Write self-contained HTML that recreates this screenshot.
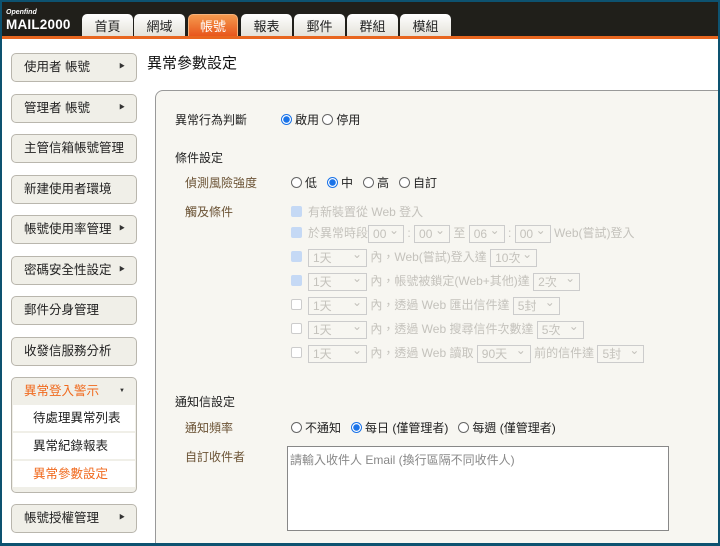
<!DOCTYPE html>
<html><head><meta charset="utf-8"><style>
*{box-sizing:border-box;margin:0;padding:0}
body{width:720px;height:546px;overflow:hidden;font-family:"Liberation Sans","Noto Sans CJK TC",sans-serif;font-size:12px;color:#222;background:#0d5270;position:relative}
#f{position:absolute;left:2px;top:2px;width:716px;height:541px;background:#fff;overflow:hidden}
.hd{position:absolute;left:0;top:0;width:716px;height:34px;background:#201f1a}
.ol{position:absolute;left:0;top:34px;width:716px;height:3px;background:#e8661f}
.logo{position:absolute;left:4px;top:7px;color:#fff}
.logo .a{font-size:7px;font-style:italic;font-weight:bold;line-height:8px}
.logo .b{font-size:13.5px;font-weight:bold;line-height:15px;letter-spacing:.2px}
.tab{position:absolute;top:12px;height:22px;width:51px;background:linear-gradient(#fff,#e4e2d9);border-radius:5px 5px 0 0;text-align:center;line-height:26px;font-size:13px;color:#222}
.tab.on{background:linear-gradient(#f59a4e,#e8561c);color:#fff;border:1px solid #f7b27a;border-bottom:none;line-height:24px}
.btn{position:absolute;left:9px;width:126px;height:29px;border:1px solid #b9b6ad;border-radius:5px;background:#f0efe8;padding-left:12px;line-height:27px;font-size:12.5px}
.btn .ar{position:absolute;right:11px;top:0;font-size:6px;color:#333}
.grp{position:absolute;left:9px;top:375px;width:126px;height:116px;border:1px solid #b9b6ad;border-radius:5px;background:#f0efe8;overflow:hidden}
.grp .h{height:27px;line-height:27px;padding-left:12px;color:#f06a1e;font-size:12.5px;position:relative}
.grp .i{background:#fff;height:26px;margin:0 1px 2px;line-height:26px;padding-left:20px;font-size:12.5px}
.title{position:absolute;left:145px;top:50px;font-size:15px;color:#111}
.pn{position:absolute;left:153px;top:88px;width:600px;height:480px;background:#f7f6f1;border:1px solid #999;border-radius:8px 0 0 0}
.t{position:absolute;white-space:nowrap}
.lb{color:#6b5335}
.dis{color:#c4c2bc}
.rd{display:inline-block;width:11px;height:11px;border:1px solid #666;border-radius:50%;vertical-align:-1px;margin-right:3px;background:#fff}
.rd.on{border:1px solid #1a73e8;background:radial-gradient(#1a73e8 0 3px,#fff 3.5px)}
.cb{display:inline-block;width:11px;height:11px;border:1px solid #ccc;border-radius:2px;vertical-align:-1px;margin-right:6px;background:#fff}
.cb.on{background:#c5d9f5;border-color:#c5d9f5}
.sel{display:inline-block;height:18px;border:1px solid #ccc;background:#f7f6f1;vertical-align:middle;padding-left:4px;line-height:16px;position:relative;color:#c4c2bc}
.sel:after{content:"⌄";position:absolute;right:4px;top:-4px;font-size:12px}
.ta{position:absolute;left:285px;top:444px;width:382px;height:85px;border:1px solid #888;background:#fff;color:#888;padding:4px 2px;font-size:12px}
</style></head><body><div id="f">
<div class="hd"></div><div class="ol"></div>
<div class="logo"><div class="a">Openfind</div><div class="b">MAIL2000</div></div>
<div class="tab" style="left:80px">首頁</div>
<div class="tab" style="left:132px">網域</div>
<div class="tab on" style="left:186px;width:50px">帳號</div>
<div class="tab" style="left:239px">報表</div>
<div class="tab" style="left:292px">郵件</div>
<div class="tab" style="left:345px">群組</div>
<div class="tab" style="left:398px">模組</div>
<div class="btn" style="top:51px">使用者 帳號<span class="ar">▶</span></div>
<div class="btn" style="top:92px">管理者 帳號<span class="ar">▶</span></div>
<div class="btn" style="top:132px">主管信箱帳號管理</div>
<div class="btn" style="top:173px">新建使用者環境</div>
<div class="btn" style="top:213px">帳號使用率管理<span class="ar">▶</span></div>
<div class="btn" style="top:254px">密碼安全性設定<span class="ar">▶</span></div>
<div class="btn" style="top:294px">郵件分身管理</div>
<div class="btn" style="top:335px">收發信服務分析</div>
<div class="grp"><div class="h">異常登入警示<span style="position:absolute;right:11px;font-size:6px;color:#333">▼</span></div>
<div class="i">待處理異常列表</div><div class="i">異常紀錄報表</div><div class="i" style="color:#f06a1e">異常參數設定</div></div>
<div class="btn" style="top:502px">帳號授權管理<span class="ar">▶</span></div>
<div class="title">異常參數設定</div>
<div class="pn"></div>
<div class="t" style="left:173px;top:109px">異常行為判斷</div>
<div class="t" style="left:279px;top:109px"><span class="rd on"></span>啟用 <span class="rd"></span>停用</div>
<div class="t" style="left:173px;top:147px">條件設定</div>
<div class="t lb" style="left:183px;top:172px">偵測風險強度</div>
<div class="t" style="left:289px;top:172px"><span class="rd"></span>低 &nbsp;&nbsp;<span class="rd on"></span>中 &nbsp;&nbsp;<span class="rd"></span>高 &nbsp;&nbsp;<span class="rd"></span>自訂</div>
<div class="t lb" style="left:183px;top:201px">觸及條件</div>
<div class="t dis" style="left:289px;top:201px"><span class="cb on"></span>有新裝置從 Web 登入</div>
<div class="t dis" style="left:289px;top:222px"><span class="cb on"></span>於異常時段<span class="sel" style="width:36px">00</span> : <span class="sel" style="width:36px">00</span> 至 <span class="sel" style="width:36px">06</span> : <span class="sel" style="width:36px">00</span> Web(嘗試)登入</div>
<div class="t dis" style="left:289px;top:246px"><span class="cb on"></span><span class="sel" style="width:59px">1天</span> 內，Web(嘗試)登入達 <span class="sel" style="width:47px">10次</span></div>
<div class="t dis" style="left:289px;top:270px"><span class="cb on"></span><span class="sel" style="width:59px">1天</span> 內，帳號被鎖定(Web+其他)達 <span class="sel" style="width:47px">2次</span></div>
<div class="t dis" style="left:289px;top:294px"><span class="cb"></span><span class="sel" style="width:59px">1天</span> 內，透過 Web 匯出信件達 <span class="sel" style="width:47px">5封</span></div>
<div class="t dis" style="left:289px;top:318px"><span class="cb"></span><span class="sel" style="width:59px">1天</span> 內，透過 Web 搜尋信件次數達 <span class="sel" style="width:47px">5次</span></div>
<div class="t dis" style="left:289px;top:342px"><span class="cb"></span><span class="sel" style="width:59px">1天</span> 內，透過 Web 讀取 <span class="sel" style="width:54px">90天</span> 前的信件達 <span class="sel" style="width:47px">5封</span></div>
<div class="t" style="left:173px;top:391px">通知信設定</div>
<div class="t lb" style="left:183px;top:417px">通知頻率</div>
<div class="t" style="left:289px;top:417px"><span class="rd"></span>不通知 &nbsp;&nbsp;<span class="rd on"></span>每日 (僅管理者) &nbsp;&nbsp;<span class="rd"></span>每週 (僅管理者)</div>
<div class="t lb" style="left:183px;top:446px">自訂收件者</div>
<div class="ta">請輸入收件人 Email (換行區隔不同收件人)</div>
</div></body></html>
